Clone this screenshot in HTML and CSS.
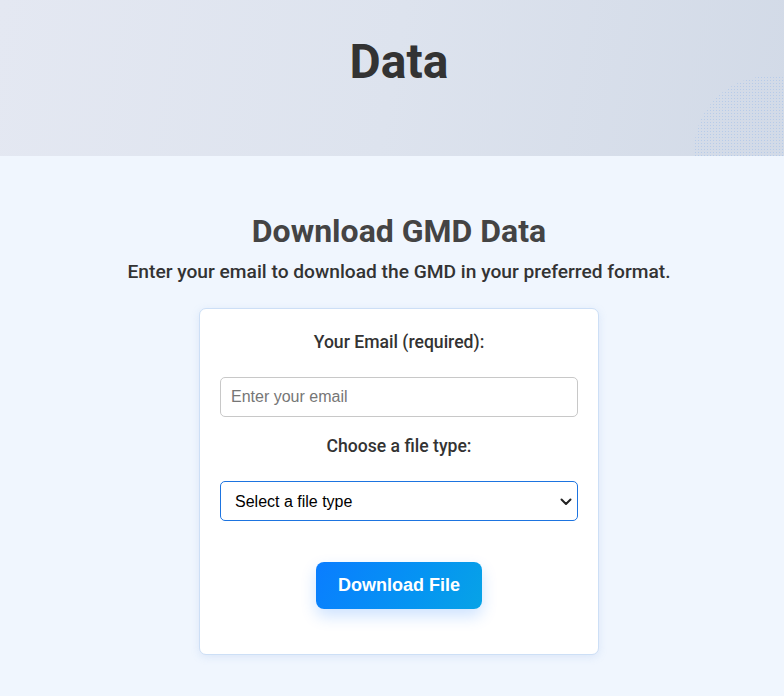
FILE: index.html
```html
<!DOCTYPE html>
<html lang="en">
<head>
    <meta charset="UTF-8">
    <meta name="viewport" content="width=device-width, initial-scale=1.0">
    <title>Data</title>
    <link rel="stylesheet" href="styles.css">
</head>
<body>
    <!-- Page header -->
    <header class="page-header">
        <h1>Data</h1>
    </header>

    <!-- Download section -->
    <main class="download">
        <h2>Download GMD Data</h2>
        <p class="lead">Enter your email to download the GMD in your preferred format.</p>

        <form class="download-card">
            <label for="email">Your Email (required):</label>
            <input type="email" id="email" name="email" placeholder="Enter your email" required>

            <label for="filetype">Choose a file type:</label>
            <div class="select-wrap">
                <select id="filetype" name="filetype">
                    <option value="">Select a file type</option>
                    <option value="csv">CSV</option>
                    <option value="xlsx">Excel</option>
                    <option value="dta">Stata</option>
                </select>
                <svg class="chevron" width="12" height="8" viewBox="0 0 12 8" aria-hidden="true">
                    <path d="M1.5 1.5 6 6l4.5-4.5" fill="none" stroke="#222" stroke-width="2" stroke-linecap="round" stroke-linejoin="round"/>
                </svg>
            </div>

            <button type="submit">Download File</button>
        </form>
    </main>
</body>
</html>
```

FILE: styles.css
```css
/* Reset */
* {
    margin: 0;
    padding: 0;
    box-sizing: border-box;
}

body {
    font-family: Roboto, "Noto Sans", sans-serif;
    background-color: #f0f6fe;
    color: #333;
    min-height: 100vh;
}

/* Header */
.page-header {
    position: relative;
    overflow: hidden;
    height: 156px;
    padding: 34px 0 0 14px;
    text-align: center;
    background: linear-gradient(100deg, #e4e8f2 0%, #dde3ee 50%, #d2dae7 100%);
}

/* dotted decoration, bottom right corner */
.page-header::after {
    content: "";
    position: absolute;
    right: -60px;
    bottom: -70px;
    width: 150px;
    height: 150px;
    border-radius: 50%;
    background-image: radial-gradient(rgba(150, 185, 235, 0.45) 0.8px, transparent 1px);
    background-size: 3px 3px;
}

.page-header h1 {
    font-size: 48px;
    font-weight: 700;
    line-height: 56px;
    color: #333;
}

/* Download section */
.download {
    padding: 56px 6px 20px 20px;
    display: flex;
    flex-direction: column;
    align-items: center;
    text-align: center;
}

.download h2 {
    font-size: 32px;
    font-weight: 700;
    line-height: 38px;
    color: #444;
}

.lead {
    margin-top: 11px;
    font-size: 19.2px;
    font-weight: 500;
    line-height: 22px;
    color: #333;
}

/* Card */
.download-card {
    margin-top: 25px;
    width: 400px;
    padding: 23px 20px 45px;
    background: #fff;
    border: 1px solid #cddff6;
    border-radius: 7px;
    box-shadow: 0 2px 8px rgba(120, 160, 220, 0.18);
    display: flex;
    flex-direction: column;
    align-items: stretch;
}

.download-card label {
    display: block;
    font-size: 17.6px;
    font-weight: 500;
    line-height: 20px;
    color: #333;
    margin-bottom: 25px;
}

.download-card input {
    height: 40px;
    padding: 0 10px;
    border: 1px solid #c8c8c8;
    border-radius: 5px;
    font-family: "Liberation Sans", Arial, sans-serif;
    font-size: 16px;
    color: #222;
    background: #fff;
    margin-bottom: 19px;
}

.download-card input::placeholder {
    color: #767676;
}

.select-wrap {
    position: relative;
    margin-bottom: 41px;
}

.select-wrap select {
    width: 100%;
    height: 40px;
    padding: 0 30px 0 14px;
    border: 1px solid #1d74e0;
    border-radius: 5px;
    font-family: "Liberation Sans", Arial, sans-serif;
    font-size: 16px;
    color: #000;
    background: #fff;
    appearance: none;
    -webkit-appearance: none;
}

.chevron {
    position: absolute;
    right: 6px;
    top: 17px;
    pointer-events: none;
}

/* Button */
.download-card button {
    align-self: center;
    height: 47px;
    padding: 0 22px;
    border: none;
    border-radius: 8px;
    background: linear-gradient(120deg, #0a7dff 0%, #0594f2 60%, #07a3e6 100%);
    color: #fff;
    font-family: "Liberation Sans", Arial, sans-serif;
    font-size: 18px;
    font-weight: 700;
    cursor: pointer;
    box-shadow: 0 7px 16px rgba(0, 110, 255, 0.2);
}
```
